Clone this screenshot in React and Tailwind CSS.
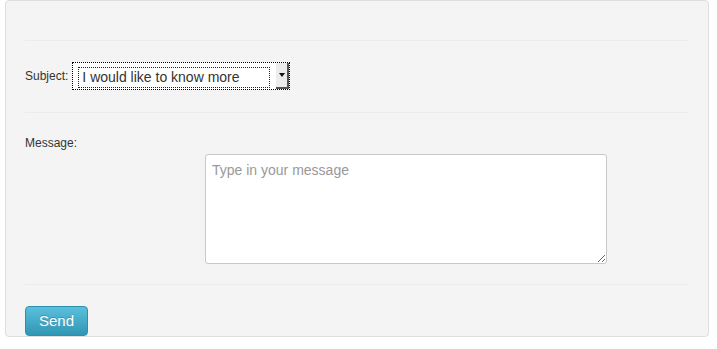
import { useState } from "react";

const Rule = () => <div className="h-px bg-[#fbfbfb] border-t border-[#ececec]" />;

const App = () => {
    const [message, setMessage] = useState("");

    return (
        <div className="w-[717px] h-[349px] bg-white font-['Liberation_Sans',Arial,sans-serif] text-[#333]">
            <div className="ml-[5px] w-[704px] bg-[#f4f4f4] border border-[#dedede] rounded-[4px] px-[19px] pt-[39px]">
                <Rule />

                {/* Subject row */}
                <div className="flex items-center mt-[21px] h-[28px]">
                    <label className="text-[12px] leading-[15px] mr-[4px]">Subject:</label>
                    <div className="flex w-[218px] h-[28px] border border-dotted border-black bg-white">
                        <div className="flex-1 pl-[5px] pt-[4px]">
                            <div className="w-[192px] h-[21px] border border-dotted border-[#222] flex items-center pl-[3px] text-[14px] leading-[19px] text-[#333]">
                                I would like to know more
                            </div>
                        </div>
                        <div className="w-[13px] h-full bg-[#ececec] border-r-2 border-b-2 border-[#555] flex items-center justify-center">
                            <svg width="6" height="4" viewBox="0 0 6 4">
                                <path d="M0 0h6L3 4z" fill="#111" />
                            </svg>
                        </div>
                    </div>
                </div>

                <div className="mt-[22px]">
                    <Rule />
                </div>

                {/* Message */}
                <label className="block mt-[23px] text-[12px] leading-[15px]">Message:</label>
                <textarea
                    value={message}
                    onChange={(e) => setMessage(e.target.value)}
                    placeholder="Type in your message"
                    className="block mt-[3px] ml-[180px] w-[402px] h-[110px] bg-white border border-[#c8c8c8] rounded-[3px] px-[6px] pt-[5px] text-[14px] leading-[20px] placeholder-[#999] outline-none font-['Liberation_Sans',Arial,sans-serif]"
                />

                <div className="mt-[20px]">
                    <Rule />
                </div>

                <button
                    type="button"
                    className="mt-[21px] w-[63px] h-[30px] rounded-[4px] border border-[#2f8fae] bg-gradient-to-b from-[#5bc0de] to-[#2f96b4] text-white text-[15px] leading-[28px] [text-shadow:0_-1px_0_rgba(0,0,0,0.2)]"
                >
                    Send
                </button>
            </div>
        </div>
    );
};

export default App;
